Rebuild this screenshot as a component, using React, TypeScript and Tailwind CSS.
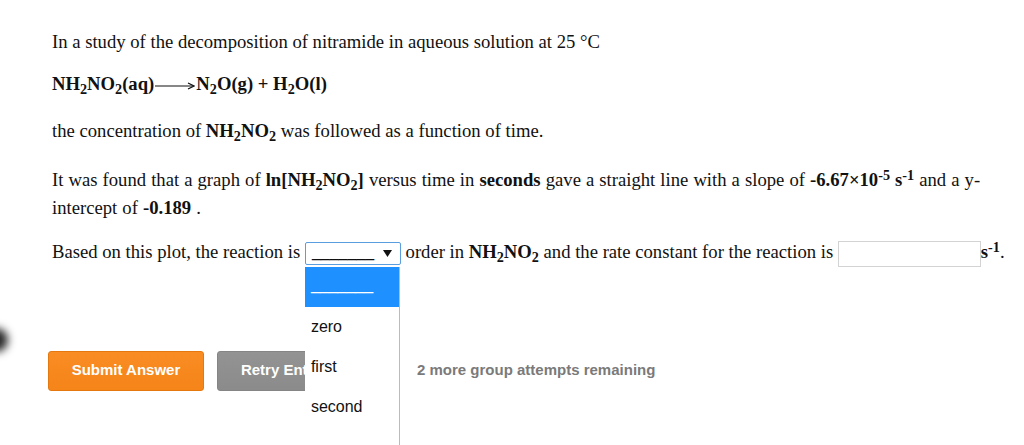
import React from "react";

const Sub = ({ children }: { children: React.ReactNode }) => (
  <span className="relative top-[0.28em] text-[0.76em] leading-none">{children}</span>
);
const Sup = ({ children }: { children: React.ReactNode }) => (
  <span className="relative top-[-0.42em] text-[0.76em] leading-none">{children}</span>
);

const NH2NO2 = () => (
  <b>
    NH<Sub>2</Sub>NO<Sub>2</Sub>
  </b>
);

export default function App() {
  return (
    <div className="relative w-[1024px] h-[445px] overflow-hidden bg-white text-[#111] font-['Liberation_Serif',serif] text-[18.67px]">
      <div className="absolute left-[-16px] top-[328px] w-[24px] h-[24px] rounded-full bg-[#2a2a2a] blur-[4px]" />
      <div className="pl-[52px] pt-[30px]">
        <p className="leading-[24px]">In a study of the decomposition of nitramide in aqueous solution at 25 °C</p>
        <p className="mt-[18px] leading-[24px] font-bold">
          NH<Sub>2</Sub>NO<Sub>2</Sub>(aq)
          <svg width="40" height="10" viewBox="0 0 40 10" className="inline-block align-middle mx-[1px]">
            <line x1="0" y1="5" x2="38" y2="5" stroke="#111" strokeWidth="1.2" />
            <path d="M33 2 L39 5 L33 8" fill="none" stroke="#111" strokeWidth="1.2" />
          </svg>
          N<Sub>2</Sub>O(g) + H<Sub>2</Sub>O(l)
        </p>
        <p className="mt-[23px] leading-[24px]">
          the concentration of <NH2NO2 /> was followed as a function of time.
        </p>
        <p className="mt-[23px] leading-[28px] pr-[16px] [word-spacing:0.4px]">
          It was found that a graph of{" "}
          <b>
            ln[NH<Sub>2</Sub>NO<Sub>2</Sub>]
          </b>{" "}
          versus time in <b>seconds</b> gave a straight line with a slope of{" "}
          <b>
            -6.67×10<Sup>-5</Sup> s<Sup>-1</Sup>
          </b>{" "}
          and a y-intercept of <b>-0.189</b> .
        </p>
        <p className="mt-[17px] leading-[26px] whitespace-nowrap">
          Based on this plot, the reaction is{" "}
          <span className="relative inline-block align-middle">
            <span className="flex items-center justify-between w-[96px] h-[23px] border border-[#5b9ee0] rounded-[2px] pl-[6px] pr-[8px] font-['Liberation_Sans',Arial,sans-serif] text-[16px] leading-none">
              <span className="relative top-[-2px]">_______</span>
              <svg width="9" height="7" viewBox="0 0 9 7">
                <path d="M0 0 L9 0 L4.5 7 Z" fill="#111" />
              </svg>
            </span>
            <span className="absolute left-0 top-[25px] z-10 w-[95px] h-[180px] bg-white border-r border-[#a8bfdc] font-['Liberation_Sans',Arial,sans-serif] text-[16px] leading-none">
              <span className="flex items-center h-[40px] bg-[#1e90ff] text-white pl-[6px]">
                <span className="relative top-[-2px]">_______</span>
              </span>
              <span className="flex items-center h-[40px] pl-[6px]">zero</span>
              <span className="flex items-center h-[40px] pl-[6px]">first</span>
              <span className="flex items-center h-[40px] pl-[6px]">second</span>
            </span>
          </span>{" "}
          order in <NH2NO2 /> and the rate constant for the reaction is{" "}
          <span className="inline-block align-middle w-[143px] h-[26px] border border-[#d3d3d3] bg-white" />
          <b>
            s<Sup>-1</Sup>
          </b>
          .
        </p>
        <div className="mt-[84px] ml-[-4px] flex items-center font-['Liberation_Sans',Arial,sans-serif] font-bold text-[15px]">
          <button className="w-[156px] h-[40px] rounded-[3px] border border-[#e5780f] bg-gradient-to-b from-[#f98d24] via-[#f7881e] to-[#f58519] text-white">
            Submit Answer
          </button>
          <button className="ml-[13px] w-[182px] h-[40px] rounded-[3px] border border-[#858585] bg-gradient-to-b from-[#939393] via-[#8f8f8f] to-[#8b8b8b] text-white">
            Retry Entire Group
          </button>
          <span className="ml-[18px] text-[#7a7a7a]">2 more group attempts remaining</span>
        </div>
      </div>
    </div>
  );
}
